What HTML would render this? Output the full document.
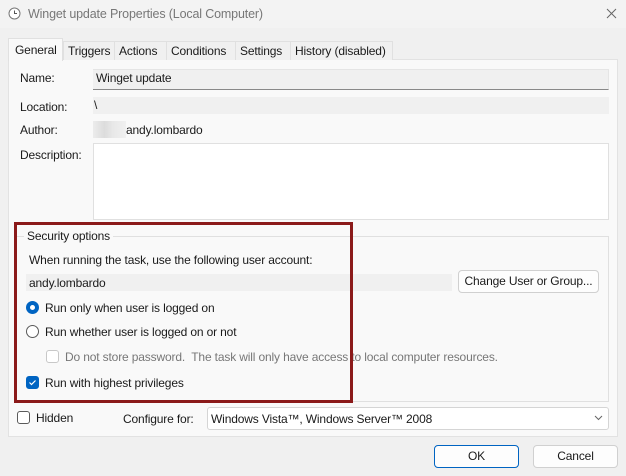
<!DOCTYPE html>
<html><head><style>
*{box-sizing:border-box;margin:0;padding:0}
body{width:626px;height:476px;background:#f0f0f0;font-family:"Liberation Sans",sans-serif;font-size:12px;letter-spacing:-0.15px;color:#1a1a1a;position:relative;overflow:hidden}
.a{position:absolute;white-space:nowrap}
.tab{position:absolute;top:41px;height:19px;border:1px solid #e0e0e0;border-bottom:none;background:#f0f0f0;padding:2px 0 0 4px}
.fld{position:absolute;background:#f0f0f0}
.btn{position:absolute;background:#fdfdfd;border:1px solid #d0d0d0;border-radius:4px;text-align:center;line-height:21px}
.rad{position:absolute;width:13px;height:13px;border-radius:50%;border:1px solid #5a5a5a;background:#fff}
.chk{position:absolute;width:13px;height:13px;border-radius:3px;border:1px solid #5a5a5a;background:#fff}
</style></head><body>
<div class="a" style="left:0;top:0;width:626px;height:28px;background:#f3f3f3"></div>
<svg class="a" style="left:8px;top:7px" width="13" height="13" viewBox="0 0 13 13"><circle cx="6.5" cy="6.5" r="5.5" fill="#fff" stroke="#777"/><path d="M6.5 3.5V6.5H9" stroke="#555" fill="none"/></svg>
<div class="a" style="left:28px;top:7px;color:#777;font-size:12.5px">Winget update Properties (Local Computer)</div>
<svg class="a" style="left:606px;top:8px" width="11" height="11"><path d="M1 1L10 10M10 1L1 10" stroke="#666" stroke-width="1"/></svg>
<div class="a" style="left:8px;top:59px;width:610px;height:378px;background:#f9f9f9;border:1px solid #e2e2e2"></div>
<div class="tab" style="left:63px;width:52px">Triggers</div>
<div class="tab" style="left:114px;width:53px">Actions</div>
<div class="tab" style="left:166px;width:70px">Conditions</div>
<div class="tab" style="left:235px;width:56px">Settings</div>
<div class="tab" style="left:290px;width:103px">History (disabled)</div>
<div class="tab" style="left:8px;top:38px;height:23px;width:55px;background:#f9f9f9;padding:4px 0 0 6px;z-index:2">General</div>
<div class="a" style="left:20px;top:71px">Name:</div>
<div class="fld" style="left:93px;top:69px;width:516px;height:21px;border-bottom:1px solid #888;border-top:1px solid #e5e5e5;border-right:1px solid #e5e5e5"></div>
<div class="a" style="left:96px;top:71px">Winget update</div>
<div class="a" style="left:20px;top:100px">Location:</div>
<div class="fld" style="left:93px;top:97px;width:516px;height:17px"></div>
<div class="a" style="left:94px;top:98px">\</div>
<div class="a" style="left:20px;top:123px">Author:</div>
<div class="a" style="left:93px;top:121px;width:33px;height:17px;background:linear-gradient(90deg,#ececec,#dcdcdc 35%,#e8e8e8 60%,#f0f0f0)"></div>
<div class="a" style="left:126px;top:123px">andy.lombardo</div>
<div class="a" style="left:20px;top:148px">Description:</div>
<div class="a" style="left:93px;top:143px;width:516px;height:77px;background:#fff;border:1px solid #e0e0e0"></div>
<div class="a" style="left:15px;top:236px;width:594px;height:166px;border:1px solid #e0e0e0"></div>
<div class="a" style="left:24px;top:229px;background:#f9f9f9;padding:0 3px">Security options</div>
<div class="a" style="left:29px;top:253px">When running the task, use the following user account:</div>
<div class="fld" style="left:26px;top:274px;width:426px;height:17px"></div>
<div class="a" style="left:29px;top:276px">andy.lombardo</div>
<div class="btn" style="left:458px;top:270px;width:141px;height:23px">Change User or Group...</div>
<div class="rad" style="left:26px;top:301px;border:4px solid #0064c2"></div>
<div class="a" style="left:45px;top:301px">Run only when user is logged on</div>
<div class="rad" style="left:26px;top:325px"></div>
<div class="a" style="left:45px;top:325px">Run whether user is logged on or not</div>
<div class="chk" style="left:46px;top:350px;border-color:#c8c8c8"></div>
<div class="a" style="left:65px;top:350px;color:#777">Do not store password.&nbsp; The task will only have access to local computer resources.</div>
<div class="chk" style="left:26px;top:376px;background:#0064c2;border-color:#0064c2"></div>
<svg class="a" style="left:26px;top:376px" width="13" height="13"><path d="M3.5 6.5L5.5 8.5L9.5 4.5" stroke="#fff" fill="none" stroke-width="1.2"/></svg>
<div class="a" style="left:45px;top:376px">Run with highest privileges</div>
<div class="a" style="left:14px;top:222px;width:339px;height:181px;border:3px solid #8b1a1a"></div>
<div class="chk" style="left:17px;top:411px"></div>
<div class="a" style="left:36px;top:411px">Hidden</div>
<div class="a" style="left:123px;top:412px">Configure for:</div>
<div class="a" style="left:207px;top:407px;width:402px;height:23px;background:#fff;border:1px solid #d5d5d5;border-radius:3px"></div>
<div class="a" style="left:211px;top:412px">Windows Vista™, Windows Server™ 2008</div>
<svg class="a" style="left:594px;top:415px" width="9" height="6"><path d="M1 1L4.5 4.5L8 1" stroke="#666" fill="none"/></svg>
<div class="btn" style="left:434px;top:445px;width:85px;height:23px;border-color:#0064c2">OK</div>
<div class="btn" style="left:533px;top:445px;width:85px;height:23px">Cancel</div>
</body></html>
